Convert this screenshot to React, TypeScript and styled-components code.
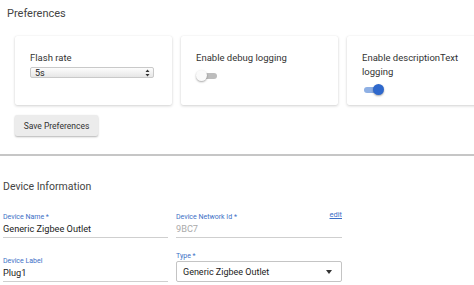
import React from "react";
import styled, { createGlobalStyle } from "styled-components";

const Global = createGlobalStyle`
  html, body { margin: 0; padding: 0; background: #fff; }
  body { width: 474px; height: 285px; overflow: hidden; font-family: Roboto, "Noto Sans", "Liberation Sans", sans-serif; color: #333; }
  * { box-sizing: border-box; }
`;

const Page = styled.div`
  width: 474px;
  overflow: hidden;
`;

const PrefSection = styled.section`
  padding: 7px 0 0 7px;
`;

const Title = styled.h2`
  margin: 0;
  font-size: 11px;
  line-height: 14px;
  font-weight: 400;
  color: #444;
`;

const SubTitle = styled(Title)`
  font-size: 10.5px;
`;

const CardRow = styled.div`
  display: flex;
  gap: 9px;
  margin: 15px 0 0 15px;
  width: 520px;
`;

const Card = styled.div`
  flex: 0 0 157px;
  height: 69px;
  padding: 15px 14px 0 15px;
  background: #fff;
  border-radius: 2px;
  box-shadow: 0 1px 3px rgba(0, 0, 0, 0.18), 0 0 1px rgba(0, 0, 0, 0.08);
`;

const CardLabel = styled.div`
  font-size: 9.5px;
  line-height: 14px;
  color: #333;
`;

const NativeSelect = styled.div`
  margin-top: 2px;
  width: 124px;
  height: 11px;
  display: flex;
  align-items: center;
  justify-content: space-between;
  padding: 0 3px 0 4px;
  font-size: 9px;
  color: #222;
  border: 1px solid #c9c9c9;
  border-radius: 2px;
  background: linear-gradient(#fdfdfd, #e6e6e6);
`;

const Toggle = styled.div<{ $on?: boolean }>`
  position: relative;
  margin-top: 6px;
  width: 21px;
  height: 10px;
  &::before {
    content: "";
    position: absolute;
    left: 2px;
    top: 2px;
    width: 19px;
    height: 6px;
    border-radius: 3px;
    background: ${(p) => (p.$on ? "#8fb0e4" : "#bdbdbd")};
  }
  &::after {
    content: "";
    position: absolute;
    top: -1px;
    left: ${(p) => (p.$on ? "11px" : "0")};
    width: 11px;
    height: 11px;
    border-radius: 50%;
    background: ${(p) => (p.$on ? "#2e68cc" : "#fafafa")};
    box-shadow: 0 1px 2px rgba(0, 0, 0, 0.35);
  }
`;

const SaveButton = styled.button`
  display: block;
  margin: 10px 0 0 15px;
  width: 83px;
  height: 21px;
  padding: 0;
  border: none;
  border-radius: 2px;
  background: #ececec;
  box-shadow: 0 1px 2px rgba(0, 0, 0, 0.3);
  font-family: Roboto, "Liberation Sans", sans-serif;
  font-size: 8.5px;
  font-weight: 400;
  color: #333;
`;

const Divider = styled.hr`
  margin: 18px 0 0;
  border: none;
  height: 2px;
  background: #c6c6c6;
`;

const DeviceSection = styled.section`
  padding: 24px 0 0 3px;
`;

const FieldGrid = styled.div`
  display: grid;
  grid-template-columns: 165px 166px;
  column-gap: 8px;
  row-gap: 13px;
  align-items: end;
  margin-top: 16px;
`;

const Field = styled.div`
  display: flex;
  flex-direction: column;
`;

const LabelRow = styled.div`
  display: flex;
  justify-content: space-between;
  align-items: flex-end;
`;

const FieldLabel = styled.label`
  font-size: 7px;
  line-height: 10px;
  color: #3b6fc6;
`;

const EditLink = styled.a`
  font-size: 7.5px;
  line-height: 10px;
  color: #3b6fc6;
  text-decoration: underline;
  margin-bottom: 2px;
`;

const FieldValue = styled.div<{ $muted?: boolean }>`
  font-size: 9.2px;
  line-height: 14px;
  color: ${(p) => (p.$muted ? "#aaa" : "#222")};
  padding-bottom: 1px;
  border-bottom: 1px solid #cfcfcf;
`;

const TypeSelect = styled.div`
  height: 21px;
  display: flex;
  align-items: center;
  justify-content: space-between;
  padding: 0 9px 0 6px;
  border: 1px solid #c4c4c4;
  border-radius: 2px;
  font-size: 9px;
  color: #222;
`;

const Caret = styled.span`
  width: 0;
  height: 0;
  border-left: 3.5px solid transparent;
  border-right: 3.5px solid transparent;
  border-top: 4px solid #333;
`;

const UpDown = () => (
  <svg width="5" height="8" viewBox="0 0 5 8">
    <path d="M2.5 0.5 L4.5 3 L0.5 3 Z M2.5 7.5 L4.5 5 L0.5 5 Z" fill="#333" />
  </svg>
);

export default function App() {
  return (
    <Page>
      <Global />
      <PrefSection>
        <Title>Preferences</Title>
      </PrefSection>
      <CardRow>
        <Card>
          <CardLabel>Flash rate</CardLabel>
          <NativeSelect>
            <span>5s</span>
            <UpDown />
          </NativeSelect>
        </Card>
        <Card>
          <CardLabel>Enable debug logging</CardLabel>
          <Toggle />
        </Card>
        <Card>
          <CardLabel>Enable descriptionText logging</CardLabel>
          <Toggle $on />
        </Card>
      </CardRow>
      <SaveButton>Save Preferences</SaveButton>
      <Divider />
      <DeviceSection>
        <SubTitle>Device Information</SubTitle>
        <FieldGrid>
          <Field>
            <FieldLabel>Device Name *</FieldLabel>
            <FieldValue>Generic Zigbee Outlet</FieldValue>
          </Field>
          <Field>
            <LabelRow>
              <FieldLabel>Device Network Id *</FieldLabel>
              <EditLink>edit</EditLink>
            </LabelRow>
            <FieldValue $muted>9BC7</FieldValue>
          </Field>
          <Field>
            <FieldLabel>Device Label</FieldLabel>
            <FieldValue>Plug1</FieldValue>
          </Field>
          <Field>
            <FieldLabel>Type *</FieldLabel>
            <TypeSelect>
              <span>Generic Zigbee Outlet</span>
              <Caret />
            </TypeSelect>
          </Field>
        </FieldGrid>
      </DeviceSection>
    </Page>
  );
}
